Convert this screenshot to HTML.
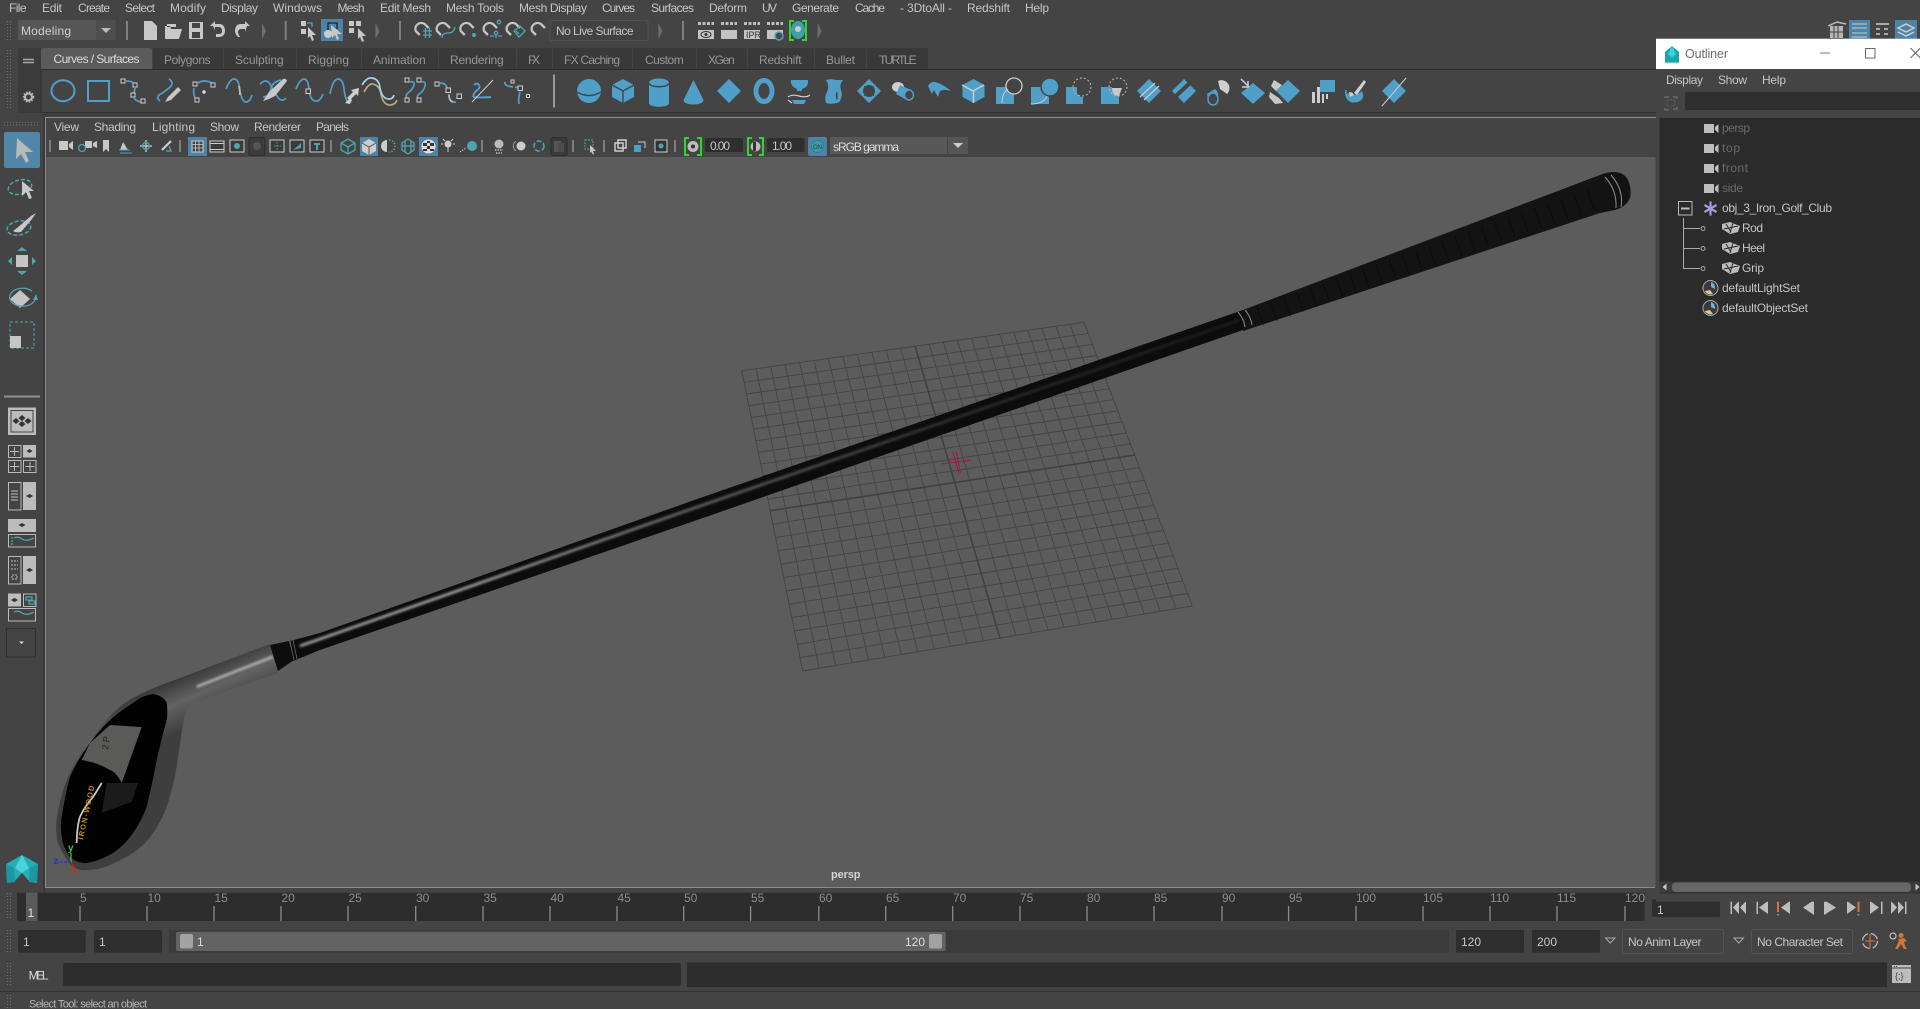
<!DOCTYPE html>
<html><head><meta charset="utf-8"><title>Maya</title>
<style>
html,body{margin:0;padding:0;background:#444;overflow:hidden}
svg{display:block}
text{font-family:"Liberation Sans",sans-serif;font-size:12px;fill:#c6c6c6}
.d{fill:#979797}.tl{fill:#8e8e8e}.sh{fill:#6b6b6b}
.b{fill:#4f9fc9}.s{fill:none;stroke:#4f9fc9;stroke-width:1.7}
.g{fill:#c8c8c8}.w{fill:none;stroke:#cfcfcf;stroke-width:1.2}
.q{fill:#3f3f3f;stroke:#cfcfcf;stroke-width:1}
.t{fill:none;stroke:#4fa5b0;stroke-width:1.3}
.m{fill:none;stroke:#7f7f7f;stroke-width:2}
.dk{stroke:#444;stroke-width:1.4;fill:none}
</style></head><body>
<svg width="1920" height="1009" viewBox="0 0 1920 1009" xmlns="http://www.w3.org/2000/svg">
<rect width="1920" height="1009" fill="#444"/>

<!-- menu -->
<g>
<text x="9" y="12" textLength="17.5">File</text><text x="42" y="12" textLength="20">Edit</text><text x="78" y="12" textLength="32">Create</text><text x="125" y="12" textLength="30">Select</text><text x="170" y="12" textLength="36">Modify</text><text x="221" y="12" textLength="37">Display</text><text x="273" y="12" textLength="49">Windows</text><text x="337.5" y="12" textLength="27">Mesh</text><text x="380" y="12" textLength="51">Edit Mesh</text><text x="446" y="12" textLength="58">Mesh Tools</text><text x="519" y="12" textLength="68">Mesh Display</text><text x="602" y="12" textLength="33">Curves</text><text x="651" y="12" textLength="43">Surfaces</text><text x="709" y="12" textLength="38">Deform</text><text x="762" y="12" textLength="15">UV</text><text x="792" y="12" textLength="47">Generate</text><text x="855" y="12" textLength="30">Cache</text><text x="900" y="12" textLength="52">- 3DtoAll -</text><text x="967" y="12" textLength="43">Redshift</text><text x="1025" y="12" textLength="24">Help</text>
</g>

<!-- status line -->
<path d="M7.5 21V40M10.5 21V40M7.5 50V110M10.5 50V110" stroke="#6e6e6e" stroke-dasharray="1 2"/>
<rect x="18" y="20" width="97.5" height="20" rx="1" fill="#565656"/><rect x="96" y="20" width="19.5" height="20" fill="#4e4e4e"/><path d="M101 28h10l-5 5z" fill="#bbb"/>
<text x="21" y="35" textLength="50" style="fill:#d0d0d0">Modeling</text>
<path class="m" d="M127 21V40M285.700 21V40M400 21V40M683 21V40" />
<path d="M262 23l4 8-4 8zM375.500 23l4 8-4 8zM658.400 23l4 8-4 8zM817.600 23l4 8-4 8z" fill="#6e6e6e"/>
<path class="g" d="M144 21h8l5 5v14h-13z"/>
<path class="g" d="M165 26v13h14l3-10h-11l-1-3zM167 24h9v3h-9z"/>
<path class="g" d="M189 22h14v17h-14z"/><path d="M192 23h8v5h-8zM192 32h8v6h-8z" fill="#444"/>
<path d="M213 26h-3l5-5v3h4c5 0 6 4 6 7s-2 6-6 6h-3v-3h3c2 0 3-1 3-3s-1-4-3-4h-4v3z" fill="#c8c8c8"/><path d="M247 26h3l-5-5v3h-4c-5 0-6 4-6 7 0 2 1 4 3 6h2c-1-2-2-3-2-5s2-3 3-3h4v3z" fill="#c8c8c8"/>
<path class="g" d="M301 21h5v5h-5zM301 29h5v5h-5zM308 27l8 8h-4l2 5-2 1-2-5-2 2z"/><path class="t" d="M307 23h5v4"/>
<rect x="321" y="19" width="22" height="22" fill="#4d83a6"/><path class="g" d="M331 25l11 9h-5l2 5-2 1-2-5-3 3z"/><path d="M328 30v-7h9v6" fill="none" stroke="#222" stroke-width="1.300"/><circle cx="328" cy="34" r="4" fill="#ccc"/>
<path class="g" d="M349 21h5v5h-5zM356 21h5v5h-5zM349 28h5v5h-5zM358 28l8 8h-4l2 5-2 1-2-5-2 2z"/>
<g fill="none" stroke="#c4c4c4" stroke-width="2.300">
<path d="M419.700 35l-4-4a6 6 0 0 1 9-7l4 4"/><path d="M441 35l-4-4a6 6 0 0 1 9-7l4 4"/><path d="M464.700 35l-4-4a6 6 0 0 1 9-7l4 4"/><path d="M488 35l-4-4a6 6 0 0 1 9-7l4 4"/><path d="M511 35l-4-4a6 6 0 0 1 9-7l4 4"/><path d="M536 35l-4-4a6 6 0 0 1 9-7l4 4"/>
</g>
<path class="t" d="M423 31h9M423 35h9M425.500 28v10M429.500 28v10M442 38q0-5 6-5t7-6M479.500 33"/>
<circle cx="474" cy="35" r="2" fill="#4fa5b0"/><circle cx="499" cy="22" r="1.700" class="t"/><circle cx="496" cy="33" r="1.700" class="t"/><path class="t" d="M490 36h4M498 36h4M496 35v3"/><path class="t" d="M514 31l6-5 5 5-6 6zM516 31l3 3"/>
<rect x="550" y="20.500" width="98" height="20" rx="1" fill="#424242" stroke="#505050"/>
<text x="556" y="35" textLength="77.500">No Live Surface</text>
<g fill="#c4c4c4"><path d="M698 30h16v9h-16z"/><path d="M721 30h16v9h-16z"/><path d="M744 30h16v9h-16z"/><path d="M767 30h16v9h-16z"/></g>
<path d="M698 23.500h16M721 23.500h16M744 23.500h16M767 23.500h16" stroke="#bdbdbd" stroke-width="3" stroke-dasharray="3 1.500"/>
<ellipse cx="706" cy="34.500" rx="5" ry="3" fill="none" stroke="#333"/><circle cx="706" cy="34.500" r="1.500" fill="#333"/>
<text x="746" y="38" style="font-size:9px;fill:#333">IPR</text>
<circle cx="779" cy="36" r="4" fill="#4a4a4a" stroke="#4fa5b0" stroke-width="1.500"/>
<path d="M794 21h-4v19h4M802 21h4v19h-4" fill="none" stroke="#35d135" stroke-width="2"/><ellipse cx="798" cy="30" rx="7" ry="9" fill="#3fa0a9"/><circle cx="798" cy="29" r="3" fill="#ccc"/>

<!-- top right -->
<path d="M1830 26h13v12h-13z" fill="#b5b5b5"/><path d="M1834 26v12M1838 26v12M1830 32h13" stroke="#444"/><path d="M1828 26l9-4 9 2" fill="none" stroke="#bbb" stroke-width="1.500"/>
<rect x="1849" y="20" width="21" height="19" fill="#4d83a6"/><path d="M1852 24h15M1852 28h15M1852 33h15M1852 37h15" stroke="#ccc"/>
<path d="M1876 24h13M1876 29h4M1884 29h4M1876 34h4M1884 34h4" stroke="#ccc" stroke-width="1.500"/>
<rect x="1895" y="20" width="22" height="19" fill="#4d83a6"/><path d="M1906 24l8 4-8 4-8-4zM1898 32l8 4 8-4" fill="none" stroke="#ccc" stroke-width="1.500"/>

<!-- shelf -->
<rect x="18" y="48" width="23" height="65" fill="#3b3b3b"/>
<path d="M23 59.500h11M23 62.500h11" stroke="#aaa" stroke-width="1.500"/>
<circle cx="28.500" cy="97" r="3.500" fill="none" stroke="#bbb" stroke-width="2"/><circle cx="28.500" cy="97" r="5" fill="none" stroke="#bbb" stroke-dasharray="1.500 1.500" stroke-width="1.500"/>
<rect x="41" y="70" width="1615" height="42" fill="#444"/>
<path d="M41 69.500H1656" stroke="#2e2e2e"/><path d="M41 112.500H1656" stroke="#2e2e2e"/><path d="M41 70V112" stroke="#2e2e2e"/>
<path d="M41 69V51q0-3 3-3h105q3 0 3 3v18z" fill="#5b5b5b"/>
<g fill="#393939">
<path d="M153 69V50q0-2 2-2h66q2 0 2 2v19z"/><path d="M224 69V50q0-2 2-2h68q2 0 2 2v19z"/><path d="M297 69V50q0-2 2-2h60q2 0 2 2v19z"/><path d="M362 69V50q0-2 2-2h72q2 0 2 2v19z"/><path d="M439 69V50q0-2 2-2h73q2 0 2 2v19z"/><path d="M517 69V50q0-2 2-2h31q2 0 2 2v19z"/><path d="M553 69V50q0-2 2-2h75q2 0 2 2v19z"/><path d="M633 69V50q0-2 2-2h59q2 0 2 2v19z"/><path d="M697 69V50q0-2 2-2h46q2 0 2 2v19z"/><path d="M748 69V50q0-2 2-2h62q2 0 2 2v19z"/><path d="M815 69V50q0-2 2-2h47q2 0 2 2v19z"/><path d="M867 69V50q0-2 2-2h57q2 0 2 2v19z"/>
</g>
<text x="53.500" y="63" textLength="86" style="fill:#dcdcdc">Curves / Surfaces</text>
<g class="d">
<text class="d" x="164" y="64" textLength="46.600">Polygons</text><text class="d" x="235" y="64" textLength="48.700">Sculpting</text><text class="d" x="308" y="64" textLength="41">Rigging</text><text class="d" x="373" y="64" textLength="52.700">Animation</text><text class="d" x="450" y="64" textLength="53.700">Rendering</text><text class="d" x="528" y="64" textLength="12">FX</text><text class="d" x="564" y="64" textLength="56">FX Caching</text><text class="d" x="645" y="64" textLength="38.700">Custom</text><text class="d" x="708" y="64" textLength="26.700">XGen</text><text class="d" x="759" y="64" textLength="42.600">Redshift</text><text class="d" x="826" y="64" textLength="29">Bullet</text><text class="d" x="879" y="64" textLength="37.700">TURTLE</text>
</g>
<!-- shelf icons -->
<ellipse class="s" cx="63" cy="90.700" rx="11.500" ry="10.500" style="stroke-width:2"/>
<rect class="s" x="88" y="81" width="21" height="20" style="stroke-width:2"/>
<path class="s" d="M126 81q6 0 7 2M135 88l-1 5M134 98q2 3 7 4"/><rect class="q" x="121" y="79" width="4" height="4"/><rect class="q" x="133" y="83" width="4" height="4"/><rect class="q" x="131" y="93" width="4" height="4"/><rect class="q" x="141" y="99" width="4" height="4"/>
<path class="s" d="M169 79q6 4 0 9t-10 7q-3 3 1 6"/><path class="g" d="M165 102l3-5 10-10 3 3-10 10z"/>
<path class="s" d="M198 83q6-4 14 0M194 88q-1 5 1 10"/><rect class="q" x="193" y="82" width="4" height="4"/><rect class="q" x="211" y="83" width="4" height="4"/><rect class="q" x="195" y="98" width="4" height="4"/><circle cx="204" cy="92" r="1.700" fill="#ddd"/>
<path class="s" d="M226 89q4-10 8-10q5 0 6 12q2 11 6 11q4 0 6-7"/><path d="M239 86q1 5 1 9" stroke="#bbb" stroke-width="1.800" fill="none"/>
<path class="s" d="M260 84q6-6 10 0q4 8 7 12q4 7 9 2M281 80q-9 2-10 9q-2 8-8 8"/><path class="g" d="M263 101l6-9 14-13q3-1 4 2l-12 15-6 3z"/>
<path class="s" d="M296 89q4-10 8-10q4 0 5 10q1 11 6 12q5 1 8-7"/><rect class="q" x="306" y="89" width="4.500" height="4.500"/>
<path class="s" d="M330 94q3-15 8-15q5 0 6 10q1 8 3 12"/><path d="M347 98l6-6-2-2 8-2-1 8-2-2-6 6zM345 103l5-5 2 2-2 4z" fill="#cfcfcf"/>
<path d="M364 92q5-9 9-8q7 2 8 10q2 11 9 11q5 0 7-5" fill="none" stroke="#b8a878" stroke-width="1.700"/><path class="s" d="M362 85q5-8 10-7q7 1 8 10q2 11 9 11q4 0 5-4" style="stroke:#a9d2e8"/>
<path class="s" d="M410 82q5-1 4 3t-6 8q-3 2-1 5M422 82q4-1 3 4t-6 8q-3 3-1 6"/><rect class="q" x="405" y="78" width="4" height="4"/><rect class="q" x="417" y="78" width="4" height="4"/><rect class="q" x="405" y="98" width="4" height="4"/><rect class="q" x="417" y="98" width="4" height="4"/>
<path class="s" d="M440 83q6 0 7 5M449 94q0 9 7 8"/><path d="M449 95q0 6 4 7" stroke="#bbb" stroke-width="1.700" fill="none"/><rect class="q" x="435" y="82" width="4" height="4"/><rect class="q" x="446" y="88" width="4.500" height="4.500"/><rect class="q" x="457" y="94" width="4.500" height="4.500"/>
<path class="s" d="M474 85q3-3 5 0t-3 6q-4 5-2 6t17 0" style="stroke-width:1.900"/><path d="M472 102l21-22" stroke="#cfcfcf" fill="none"/>
<path class="s" d="M505 82q-1 4 8 5M520 92q-2 6-1 12"/><path class="s" d="M515 87l4 1"/><rect class="q" x="511" y="80" width="3" height="3"/><rect class="q" x="518" y="86" width="4.500" height="4.500"/><rect class="q" x="526.500" y="94.500" width="3" height="3"/>
<path d="M554 74.500V107.500" stroke="#9a9a9a" stroke-width="2"/>
<circle class="b" cx="589" cy="91" r="12"/><path class="dk" d="M577 92q12 7 24 0"/>
<path class="b" d="M623 79l11 6v12l-11 6-11-6V85z"/><path class="dk" d="M612 85l11 6 11-6M623 91v12"/>
<path class="b" d="M649 83c0-6 20-6 20 0v20c0 5-20 5-20 0z"/><path class="dk" d="M649 83c0 5 20 5 20 0"/>
<path class="b" d="M693.500 80l10 20c0 6-20 6-20 0z"/>
<path class="b" d="M729 79l12 12-12 12-12-12z"/>
<ellipse cx="764" cy="91" rx="8" ry="10.500" fill="none" stroke="#4f9fc9" stroke-width="5"/>
<path class="b" d="M791 80h17q1 7-6 9v2h-5v-2q-7-3-6-9z"/><path class="w" d="M788 97q4-3 11-1t11-1M788 100l4 3"/><path class="b" d="M792 100h14l-2 4h-10z"/>
<path class="b" d="M826 80q8-2 11 1 3 6-1 12-1 7 3 9-7 3-13 1-2-6 1-11 3-6-1-12zM836 80q3 0 7 0-4 5-2 10t-1 11q-1 2-4 2 3-6 1-12-2-6-1-11z"/>
<path d="M869 79l12 12-12 12-12-12z" class="b"/><circle cx="869" cy="91" r="6" fill="#444"/><path d="M864 86l10 10M874 86l-10 10" stroke="#444" stroke-width="1"/>
<ellipse cx="898" cy="87" rx="6" ry="5" fill="#cfcfcf"/><path class="b" d="M900 85l9 4q4 6-1 10h-3l-9-5z"/><ellipse cx="909" cy="95" rx="4.500" ry="5" fill="#444" stroke="#4f9fc9" stroke-width="1.500"/>
<path class="b" d="M928 86q3-5 7-4 8 2 16 9-7-2-11 0l-2 6-4-7-2 4z"/>
<path class="b" d="M973.500 79l11 6v12l-11 6-11-6V85z"/><path d="M962 85l11 6 11-6M973.500 91v12" stroke="#ccc" stroke-width="1.500" fill="none"/>
<path class="b" d="M996 87h18v17h-18z"/><circle cx="1014" cy="86" r="8" fill="#444" stroke="#cfcfcf" stroke-width="1.300"/><path d="M1002 103q0-10 6-14" stroke="#ccc" fill="none"/>
<path class="b" d="M1031 87h18v17h-18z"/><path d="M1031 104q14 0 17-10" stroke="#ccc" fill="none"/><circle class="b" cx="1050" cy="87" r="9" stroke="#444" stroke-width="1.500"/>
<path class="b" d="M1066 87h11v4q0 6 6 6v7h-17z"/><circle cx="1082" cy="87" r="9" fill="none" stroke="#bbb" stroke-dasharray="2 2"/>
<path class="b" d="M1101 87h11q0 9 7 9v8h-18z"/><path d="M1112 88q0 8 7 8l3-8-10 0z" fill="#c9c9c9"/><circle cx="1118" cy="87" r="9" fill="none" stroke="#bbb" stroke-dasharray="2 2"/>
<path class="b" d="M1149 79l12 12-12 12-12-12z"/><path d="M1140 97l15-14M1144 100l15-14" stroke="#ccc" stroke-width="1.300"/>
<path class="b" d="M1184 79l12 12-12 12-12-12z"/><path d="M1176 96l15-14" stroke="#444" stroke-width="4"/><path d="M1178 99l16-15" stroke="#444" stroke-width="0"/>
<path d="M1218 81a8 8 0 0 1 9 13l-7-5z" fill="#cfcfcf"/><path class="b" d="M1207 94l8-5q5 4 2 11l-8 3z"/><ellipse cx="1213" cy="99" rx="5" ry="6" fill="#444" stroke="#4f9fc9" stroke-width="1.500"/>
<path class="b" d="M1253 83l12 10-12 11-12-11z"/><path d="M1241 79l8 8m-1 -6v6h-6" fill="none" stroke="#cfcfcf" stroke-width="1.500"/>
<path class="b" d="M1288 80l12 11-12 12-12-12z"/><path class="g" d="M1270 92l9 6 4 5-8 1-6-7zM1274 80l8 5-6 6-5-5z" transform="translate(0,0)"/>
<path class="b" d="M1320 80h15v12h-15z"/><path d="M1312 92h3v11h-3zM1317 87h3v16h-3zM1322 94h2v9h-2zM1326 94h2v5h-2z" fill="#cfcfcf"/>
<path class="b" d="M1347 93q9 4 15-2 3 7-2 10-6 3-10 0-3-3-3-8z"/><path class="s" d="M1346 90q-1 10 7 12"/><path d="M1354 93l10-13 2 2-9 13z" fill="#cfcfcf"/><path d="M1349 92a5 5 0 0 1 5 3l-4 2z" fill="#cfcfcf"/>
<path class="b" d="M1390 79l12 12-12 12-12-12z" transform="translate(4,0)"/><path d="M1382 106l24-28" stroke="#cfcfcf"/>

<!-- Viewport panel -->
<rect x="43" y="117" width="2.500" height="775" fill="#393939"/>
<path d="M4 125H38" stroke="#777" stroke-dasharray="1 2"/><path d="M4 122.500H38" stroke="#6a6a6a" stroke-dasharray="1 2"/>
<rect x="45.500" y="157" width="1610" height="730" fill="#5c5c5c"/>
<path d="M45.500 117.500H1656M45.500 117V887.500H1655" stroke="#8a8a8a" fill="none"/>
<path d="M41 115H1656" stroke="#333"/>
<text x="54" y="131" textLength="25">View</text><text x="94" y="131" textLength="42">Shading</text><text x="152" y="131" textLength="43">Lighting</text><text x="210" y="131" textLength="29">Show</text><text x="254" y="131" textLength="47">Renderer</text><text x="316" y="131" textLength="33">Panels</text>
<!-- panel toolbar -->
<path class="m" d="M50 140V152M180 140V152M331 140V152M482 140V152M573 140V152M604 140V152M675 140V152" />
<path class="g" d="M59 141h9v9h-9zM69 144l4-3v9l-4-3z"/><path class="g" d="M85 141h7v7h-7zM93 143l4-2v7l-4-2z"/><circle cx="82" cy="148" r="3.500" class="t" fill="none"/>
<path class="g" d="M103 140h6v12l-3-3-3 3z"/>
<path class="g" d="M123 142l5 8h-8z"/><path d="M119 150h11M120 153h12" stroke="#4fa5b0" fill="none"/>
<path d="M146 140v12M140 146h12" stroke="#cfcfcf" stroke-width="1.300"/><circle cx="146" cy="146" r="3.500" class="t"/>
<path d="M162 150l9-9" stroke="#cfcfcf" stroke-width="2"/><path d="M166 151h5l-2-5" class="t"/>
<rect x="188" y="137" width="19" height="19" fill="#4d83a6"/><rect x="192" y="141" width="11" height="11" fill="#444" stroke="#ccc"/><path d="M195.500 141v11M199 141v11M192 144.500h11M192 148h11" stroke="#ccc" stroke-width=".8"/>
<rect x="210" y="141" width="14" height="11" fill="#3a3a3a" stroke="#ccc"/><path d="M210 143.500h14M210 149.500h14" stroke="#ccc"/>
<rect x="230" y="140" width="14" height="12" fill="#3a3a3a" stroke="#ccc"/><circle cx="237" cy="146" r="3" fill="#4fa5b0"/>
<rect x="249" y="137.500" width="16" height="18" rx="2" fill="#3c3c3c" stroke="#2d2d2d"/><circle cx="257" cy="146" r="4" fill="#555"/>
<rect x="270" y="140" width="14" height="12" fill="#3a3a3a" stroke="#ccc"/><path d="M274 146h7M277 142v8" stroke="#4fa5b0" stroke-dasharray="1.500 1.500"/>
<rect x="290" y="140" width="14" height="12" fill="#3a3a3a" stroke="#ccc"/><path d="M293 150l5-4 3-3v5z" fill="#4fa5b0"/>
<rect x="310" y="140" width="14" height="12" fill="#3a3a3a" stroke="#ccc"/><path d="M314 143h6v2h-2v5h-2v-5h-2z" fill="#4fa5b0"/>
<path class="t" d="M348 139l7 4v7l-7 4-7-4v-7zM341 143l7 4 7-4M348 147v7"/>
<rect x="360" y="137" width="18" height="19" fill="#4d83a6"/><path d="M369 139l7 4v8l-7 4-7-4v-8z" fill="#ccc"/><path d="M369 147v8M362 143l7 4 7-4" stroke="#555" fill="none"/>
<path d="M387 140a6 6 0 0 0 0 12z" fill="#ccc"/><path d="M389 140a6 6 0 0 1 0 12" fill="none" stroke="#4fa5b0" stroke-dasharray="1.500 1.500" stroke-width="1.500"/>
<path class="t" d="M408 139l6 4v7l-6 4-6-4v-7zM402 146h12M405 141v11M411 141v11"/>
<rect x="419" y="137" width="19" height="19" fill="#4d83a6"/><circle cx="428.500" cy="146.500" r="7" fill="#ddd"/><path d="M423 143h4v3h-4zM430 143h4v3h-4zM427 146h3v3h-3zM423 149h4v2h-4zM430 149h4v2h-4zM427 141h3v2h-3z" fill="#333"/>
<circle cx="448" cy="144" r="3.500" fill="#ccc"/><path d="M448 147v5M441 144h2M453 144h2M443 139l2 2M453 139l-2 2" stroke="#ccc"/>
<circle cx="472" cy="146" r="5" fill="#4fa5b0"/><path d="M460 152l6-4" stroke="#ccc" stroke-dasharray="1.500 1"/>
<circle cx="499" cy="144" r="4.500" fill="#bbb"/><path d="M495 150h8M496 153h6" stroke="#bbb" stroke-width="1.500" stroke-dasharray="1.500 1"/>
<circle cx="521" cy="146" r="4.500" fill="#ccc"/><path d="M516 141a6 6 0 0 0 0 10" fill="none" stroke="#999"/>
<circle cx="539" cy="146" r="5" fill="none" stroke="#4fa5b0" stroke-width="1.500" stroke-dasharray="5 2"/>
<rect x="551" y="137.500" width="16" height="18" rx="2" fill="#3b3b3b" stroke="#2d2d2d"/><rect x="554" y="141" width="7" height="11" fill="#555"/><rect x="558" y="143" width="6" height="9" fill="#4d4d4d"/>
<rect x="585" y="140" width="8" height="9" fill="none" stroke="#4fa5b0" stroke-dasharray="2 1"/><path class="g" d="M590 145l6 6h-3l1 3-1 .5-2-3-1 2z"/>
<rect x="615" y="143" width="8" height="8" fill="none" stroke="#ccc" stroke-width="1.500"/><rect x="618" y="140" width="8" height="8" fill="none" stroke="#ccc" stroke-width="1.500"/>
<path d="M634 145h7v7h-7z" fill="#4d9fc5"/><path d="M638 142h7v6" fill="none" stroke="#ccc"/>
<rect x="655" y="140" width="12" height="12" fill="#333" stroke="#ccc"/><circle cx="661" cy="146" r="2.500" fill="#4fa5b0"/>
<path d="M689 138h-4v17h4M697 138h4v17h-4" fill="none" stroke="#35d135" stroke-width="2"/><circle cx="693" cy="146.500" r="5.500" fill="#bbb"/><circle cx="693" cy="146.500" r="2" fill="#333"/>
<rect x="705" y="138" width="38" height="14" rx="2" fill="#2e2e2e"/><text x="710" y="150" textLength="20">0.00</text>
<path d="M752 138h-4v17h4M759 138h4v17h-4" fill="none" stroke="#35d135" stroke-width="2"/><circle cx="755.500" cy="146.500" r="5" fill="#bbb"/><rect x="753" y="142" width="3" height="9" fill="#333"/>
<rect x="767" y="138" width="37.500" height="14" rx="2" fill="#2e2e2e"/><text x="772" y="150" textLength="20">1.00</text>
<rect x="808" y="137" width="19" height="19" rx="2" fill="#4d83a6"/><circle cx="817.500" cy="146.500" r="6" fill="#3d9aa8" stroke="#2f7f8c"/><text x="813" y="149" style="font-size:6px;fill:#244">ON</text>
<rect x="830" y="137" width="117" height="17" fill="#585858"/><text x="833" y="151" textLength="66" style="fill:#ddd">sRGB gamma</text>
<rect x="948" y="137" width="20" height="17" rx="1" fill="#555"/><path d="M953 143h10l-5 5z" fill="#ccc"/>

<!-- Left toolbar -->
<rect x="4" y="132" width="36" height="36" rx="2" fill="#5286a8"/>
<path d="M17 138l16 14h-8l4 9-3 2-5-9-5 5z" fill="#b9b9b9"/>
<ellipse cx="20" cy="187" rx="12" ry="7" fill="none" stroke="#4fa5b0" stroke-width="1.500" stroke-dasharray="4 2" transform="rotate(-15 20 187)"/><path class="g" d="M22 181l12 10h-5l3 7-3 1-3-7-4 4z"/>
<ellipse cx="19" cy="228" rx="12" ry="7" fill="none" stroke="#4fa5b0" stroke-width="1.500" stroke-dasharray="4 2" transform="rotate(-10 19 228)"/><path class="g" d="M17 228l14-12 5-3-4 6-11 13q-5 1-8-1z"/>
<rect x="16" y="255" width="12" height="12" fill="#c5c5c5"/><path d="M22 247l5 4h-10zM22 275l5-4h-10zM8 261l4-4v8zM36 261l-4-4v8z" fill="#4fa5b0"/>
<path d="M20 290l10 9-10 9-10-9z" fill="#c5c5c5"/><path d="M32 291a13 9 0 1 0 3 9" fill="none" stroke="#4fa5b0" stroke-width="1.300"/><path d="M36 294l2 6h-5z" fill="#4fa5b0"/>
<rect x="10" y="322" width="24" height="26" fill="none" stroke="#4fa5b0" stroke-dasharray="3 2"/><rect x="10" y="336" width="11" height="12" fill="#c5c5c5"/>
<path d="M4 396.500H40" stroke="#8f8f8f" stroke-width="2"/>
<rect x="8" y="407.500" width="28" height="27.500" fill="#bcbcbc"/><rect x="11" y="410.500" width="22" height="21.500" fill="none" stroke="#444"/><path d="M22 415l3.500 3-3.500 3-3.500-3zM16 418l3.500 3-3.500 3-3.500-3zM28 418l3.500 3-3.500 3-3.500-3zM22 421l3.500 3-3.500 3-3.500-3z" fill="#333"/>
<g fill="none" stroke="#bbb"><rect x="8.500" y="445.500" width="12.500" height="12"/><rect x="8.500" y="460.500" width="12.500" height="12"/><rect x="23.500" y="460.500" width="12.500" height="12"/><path d="M14.500 447v9M10 451.500h9M14.500 462v9M10 466.500h9M30 462v9M25.500 466.500h9"/></g><rect x="23" y="445" width="13" height="12.500" fill="#bcbcbc"/><path d="M29.500 449l3 2-3 2-3-2z" fill="#333"/>
<rect x="8.500" y="482.500" width="12.500" height="27.500" fill="none" stroke="#bbb"/><path d="M11 491h7M11 494h7M11 497h7M11 500h7" stroke="#bbb"/><rect x="23" y="482" width="13" height="28" fill="#bcbcbc"/><path d="M29.500 494l3.500 2-3.500 2-3.500-2z" fill="#333"/>
<rect x="8" y="519" width="28" height="13" fill="#bcbcbc"/><path d="M22 523l3.500 2-3.500 2-3.500-2z" fill="#333"/><rect x="8.500" y="534.500" width="27" height="12.500" fill="none" stroke="#bbb"/><path d="M14 538q4-2 8 1t12-1M11 538h2M11 541h2M11 544h2" class="t"/>
<rect x="8.500" y="556.500" width="12.500" height="27.500" fill="none" stroke="#bbb"/><path d="M11 561h7M11 565h7M11 569h7M12 575h5v4h-5z" stroke="#bbb" stroke-dasharray="2 1" fill="none"/><rect x="23" y="556" width="13" height="28" fill="#bcbcbc"/><path d="M29.500 568l3.500 2-3.500 2-3.500-2z" fill="#333"/>
<rect x="8" y="593.500" width="13" height="13" fill="#bcbcbc"/><path d="M14.500 598l3.500 2-3.500 2-3.500-2z" fill="#333"/><rect x="23.500" y="594" width="12.500" height="12.500" fill="none" stroke="#bbb"/><path d="M26 597h6v3h-6zM29 601h6v3h-6z" class="t"/><rect x="8.500" y="608.500" width="27" height="12.500" fill="none" stroke="#bbb"/><path d="M14 612q4-2 8 1t12-1" class="t"/>
<rect x="6.500" y="628.500" width="29" height="28.500" fill="none" stroke="#2f2f2f"/><path d="M19 641.500h5l-2.500 2.500z" fill="#ddd"/>
<path d="M6 864l16-9 16 9-1 19-7-1-8-9-8 9-7 1z" fill="#27adb6"/><path d="M22 855l-7 13 7 5 7-5z" fill="#45d4da"/><path d="M6 864l8 4 1 14-8 1zM38 864l-8 4-1 14 8 1z" fill="#1c98a2"/>

<!-- Viewport contents: grid -->
<g fill="none" stroke="#444" stroke-width=".9">
<path d="M741.700 370.700L802.700 671M756.100 368.600L819.100 668.300M770.600 366.500L835.600 665.600M785 364.500L852 662.800M799.500 362.400L868.500 660.100M813.900 360.300L884.900 657.400M828.300 358.200L901.300 654.700M842.800 356.100L917.800 651.900M857.200 354.100L934.200 649.200M871.700 352L950.700 646.500M886.100 349.900L967.100 643.800M900.500 347.800L983.500 641M929.100 343.800L1016 635.600M943.200 341.800L1032.100 632.900M957.200 339.900L1048.100 630.200M971.300 337.900L1064.100 627.500M985.400 336L1080.200 624.900M999.500 334L1096.200 622.200M1013.600 332.100L1112.200 619.500M1027.600 330.100L1128.200 616.800M1041.700 328.200L1144.300 614.100M1055.800 326.200L1160.300 611.400M1069.900 324.300L1176.300 608.700M1084 322.300L1192.300 606"/>
<path d="M741.700 370.700L1084 322.300M744.100 382.400L1088.300 333.400M746.400 394L1092.500 344.400M748.800 405.700L1096.800 355.500M751.100 417.400L1101 366.500M753.500 429L1105.300 377.600M755.900 440.700L1109.500 388.700M758.200 452.400L1113.800 399.700M760.600 464L1118 410.800M762.900 475.700L1122.300 421.800M765.300 487.400L1126.500 432.900M767.600 499L1130.800 443.900M772.700 524.100L1139.800 467.600M775.500 537.400L1144.600 480.200M778.200 550.800L1149.300 492.700M780.900 564.100L1154.100 505.300M783.600 577.500L1158.900 517.900M786.400 590.900L1163.700 530.500M789.100 604.200L1168.500 543.100M791.800 617.600L1173.200 555.600M794.500 630.900L1178 568.200M797.300 644.300L1182.800 580.800M800 657.600L1187.500 593.400M802.700 671L1192.300 606"/>
<path d="M915 345.700L1000 638.300M770 510.700L1135 455" stroke="#404040" stroke-width="1.600"/>
</g>
<g stroke="#a31a43" stroke-width="1.100" fill="none"><path d="M941 464L971.500 460M953 452L959 474M956 451L960.500 473"/></g>

<!-- Club -->
<defs><linearGradient id="hl" gradientUnits="userSpaceOnUse" x1="300" y1="645" x2="1240" y2="322"><stop offset="0" stop-color="#bbb"/><stop offset=".18" stop-color="#b5b5b5"/><stop offset=".45" stop-color="#6a6a6a"/><stop offset=".7" stop-color="#333"/><stop offset="1" stop-color="#1a1a1a"/></linearGradient>
<linearGradient id="hs" gradientUnits="userSpaceOnUse" x1="220" y1="660" x2="240" y2="705"><stop offset="0" stop-color="#3a3a3a"/><stop offset=".45" stop-color="#626262"/><stop offset="1" stop-color="#3e3e3e"/></linearGradient>
<filter id="bl" x="-5%" y="-50%" width="110%" height="200%"><feGaussianBlur stdDeviation="1.200"/></filter></defs>
<path d="M290 641L320 633L700 498L1243 310L1243 330L700 519L320 650L293 661Z" fill="#0c0c0c"/>
<path d="M300 646L700 506L1240 320" stroke="url(#hl)" stroke-width="2.400" fill="none" filter="url(#bl)"/>
<path d="M1243 310L1600 175Q1607 172 1613 172Q1624 172 1628 180Q1632 190 1630 198Q1626 207 1615 210L1600 213L1243 331Z" fill="#131313"/>
<path d="M1260 316L1600 196" stroke="#050505" stroke-width="21" stroke-dasharray="1 13" fill="none" opacity=".45"/>
<path d="M1238 312q6 7 7 15M1245 310q6 7 7 15" stroke="#8a8a8a" fill="none" stroke-width="1"/>
<path d="M1605 177Q1617 190 1616 208M1611 175Q1624 190 1621 207" stroke="#8f8f8f" fill="none" stroke-width="1"/>
<path d="M270 644L166.700 683Q145 691 133 698Q117 707 106.700 720Q92 736 83 750Q72 767 66.700 780Q59 800 56.700 820Q55 832 58 843Q64 858 73 866.700Q79 871 86.700 870Q99 870 110 865Q122 860 133 853Q146 844 153 833Q162 820 166.700 806.700Q173 788 176.700 766.700Q181 735 185 713Q187 707 193 703L278 673Z" fill="url(#hs)"/>
<path d="M153 694Q164 696 166.700 703Q168 712 166.700 720Q161 740 156.700 760Q152 785 146.700 806.700Q141 822 133 833Q125 845 113 853Q100 861 86.700 863Q76 863 70 856.700Q63 848 61.700 836.700Q60 826 61.700 816.700Q65 795 70 776.700Q76 763 83 753Q96 733 110 720Q120 711 133 703Q143 695 153 694Z" fill="#020202"/>
<path d="M110 725L141.700 727L121.700 783Q116 772 110 770Q96 762 81.700 760L90 743Z" fill="#5a5a58"/>
<path d="M106.700 783L138 783L131.700 801.700L101.700 813Z" fill="#1b1b1b"/>
<path d="M76.700 843Q77 826 80 816.700Q85 806 93.300 796.700L101.700 783" stroke="#c9c9d0" stroke-width="1.800" fill="none"/>
<text transform="translate(83 840) rotate(-78)" textLength="55" style="font-size:7.500px;font-weight:bold;fill:#c58a22">IRON-WOOD</text>
<text transform="translate(108 750) rotate(-82)" style="font-size:9px;fill:#222">2 P</text>
<path d="M196.700 686.700L273 656.700" stroke="#d0d0d0" stroke-width="2" filter="url(#bl)"/>
<path d="M270 645L289 641L294 660L278 671Z" fill="#0d0d0d"/>
<path d="M290 641l4 19M293 640l4 19" stroke="#666" stroke-width=".8"/>
<!-- axis -->
<path d="M71 862V853" stroke="#3acb3a" stroke-width="1.300"/><path d="M71 862H58" stroke="#2424d0" stroke-width="1" stroke-dasharray="3 1"/><path d="M71 862l3 5" stroke="#d11" stroke-width="1.300"/>
<text x="68" y="851" style="font-size:10px;font-weight:bold;fill:#3acb3a">y</text><text x="53.500" y="864" style="font-size:10px;font-weight:bold;fill:#2a2ad8">z</text><text x="71" y="873" style="font-size:10px;font-weight:bold;fill:#d22">x</text>
<text x="831" y="878" textLength="29.500" style="font-size:11px;font-weight:bold;fill:#d5d5d5">persp</text>

<!-- Time slider -->
<rect x="17" y="892.700" width="1627.500" height="28.300" fill="#2d2d2d"/>
<rect x="26" y="892.700" width="11.500" height="28.300" fill="#5a5a5a"/>
<text x="27.500" y="917" style="fill:#e5e5e5;font-size:12px">1</text>
<path d="M80 906V921M147 906V921M214 906V921M281 906V921M348 906V921M415.700 906V921M483 906V921M550 906V921M617 906V921M683.700 906V921M750.600 906V921M818.800 906V921M885.700 906V921M952.700 906V921M1020 906V921M1087 906V921M1154 906V921M1222 906V921M1288.600 906V921M1356 906V921M1423 906V921M1490 906V921M1557 906V921M1625 906V921" stroke="#8c8c8c" stroke-width="1.300"/>
<text class="tl" x="80" y="902">5</text><text class="tl" x="147.500" y="902">10</text><text class="tl" x="214.500" y="902">15</text><text class="tl" x="281.500" y="902">20</text><text class="tl" x="348.500" y="902">25</text><text class="tl" x="416" y="902">30</text><text class="tl" x="483.500" y="902">35</text><text class="tl" x="550.500" y="902">40</text><text class="tl" x="617.500" y="902">45</text><text class="tl" x="684" y="902">50</text><text class="tl" x="751" y="902">55</text><text class="tl" x="819" y="902">60</text><text class="tl" x="886" y="902">65</text><text class="tl" x="953" y="902">70</text><text class="tl" x="1020" y="902">75</text><text class="tl" x="1087" y="902">80</text><text class="tl" x="1154" y="902">85</text><text class="tl" x="1222" y="902">90</text><text class="tl" x="1289" y="902">95</text><text class="tl" x="1356" y="902">100</text><text class="tl" x="1423" y="902">105</text><text class="tl" x="1490" y="902">110</text><text class="tl" x="1557" y="902">115</text><text class="tl" x="1625" y="902">120</text>
<path d="M7.500 893V920M10.500 893V920M7.500 930V952M10.500 930V952M7.500 963V985M10.500 963V985M7.500 995V1008M10.500 995V1008" stroke="#6e6e6e" stroke-dasharray="1 2"/>

<!-- Range slider -->
<rect x="18" y="930" width="67.700" height="22.700" rx="2" fill="#2e2e2e"/><text x="23" y="946">1</text>
<rect x="94" y="930" width="68" height="22.700" rx="2" fill="#2e2e2e"/><text x="99" y="946">1</text>
<rect x="169" y="930" width="1280" height="22.700" fill="#3b3b3b"/>
<rect x="176" y="931.700" width="769.700" height="19.300" rx="2" fill="#636363"/>
<rect x="180" y="934" width="13" height="14.500" rx="2" fill="#a2a2a2"/><text x="197" y="946" style="fill:#ddd">1</text>
<text x="905" y="946" textLength="20" style="fill:#ddd">120</text><rect x="929" y="934" width="13" height="14.500" rx="2" fill="#a2a2a2"/>
<rect x="1456" y="930" width="68" height="22.700" rx="2" fill="#2e2e2e"/><text x="1461" y="946">120</text>
<rect x="1532" y="930" width="68" height="22.700" rx="2" fill="#2e2e2e"/><text x="1537" y="946">200</text>
<path d="M1605.500 938h9.500l-4.750 5z" fill="none" stroke="#aaa"/><path d="M1734 938h9.500l-4.750 5z" fill="none" stroke="#aaa"/>
<rect x="1622.500" y="929.500" width="101" height="24" rx="2" fill="#434343" stroke="#535353"/><text x="1628" y="946" textLength="73.500">No Anim Layer</text>
<rect x="1751.500" y="929.500" width="101" height="24" rx="2" fill="#434343" stroke="#535353"/><text x="1757" y="946" textLength="86">No Character Set</text>
<circle cx="1870" cy="941" r="7.500" fill="none" stroke="#bbb" stroke-width="1.300" stroke-dasharray="9 3"/><path d="M1870 934v14M1865 941h10" stroke="#c8693a" stroke-width="1.300"/>
<circle cx="1893" cy="936" r="3" fill="none" stroke="#ccc"/><path d="M1901 933a2.500 2.500 0 1 0 .1 0zM1898 939l6-1 3 3-3 1 1 4 2 3h-3l-3-5-3 5h-3l3-6 1-3z" fill="#d4762f"/>

<!-- Playback -->
<rect x="1652" y="899" width="68" height="18" rx="2" fill="#2e2e2e"/><text x="1657" y="914">1</text>
<g fill="#bdbdbd">
<path d="M1730.500 901h1.500v13h-1.500zM1739 901v13l-6-6.500zM1746 901v13l-6-6.500z"/>
<path d="M1756.500 901h1.500v13h-1.500zM1768 901v13l-9-6.500z"/>
<path d="M1790 901v13l-9-6.500z"/>
<path d="M1814 900v15l-11-7.500z"/>
<path d="M1824 900v15l12-7.500z"/>
<path d="M1847 901v13l9-6.500z"/>
<path d="M1870 901v13l9-6.500zM1881 901h1.500v13h-1.500z"/>
<path d="M1891 901v13l6-6.500zM1898 901v13l6-6.500zM1905 901h1.500v13h-1.500z"/>
</g>
<path d="M1778 901v11M1778 914v1.500M1858.500 901v11M1858.500 914v1.500" stroke="#d4762f" stroke-width="2"/>

<!-- Command -->
<text x="28.600" y="979.500" textLength="20" style="fill:#dcdcdc">MEL</text>
<rect x="63" y="963" width="618" height="23" rx="2" fill="#2d2d2d"/>
<rect x="687" y="962.500" width="1200" height="24.500" fill="#2d2d2d"/>
<rect x="1892" y="965" width="19" height="18" fill="#bdbdbd"/><path d="M1892 968h19" stroke="#444"/><path d="M1894 966.500h4" stroke="#444" stroke-dasharray="1 1"/><text x="1895" y="979" style="font-size:9px;fill:#444">{;}</text>
<path d="M0 991.500H1920" stroke="#333"/>
<text x="29" y="1007.500" textLength="118" style="font-size:11px;fill:#b5b5b5">Select Tool: select an object</text>

<!-- Outliner window -->
<rect x="1656" y="38.700" width="264" height="863" fill="#444"/>
<rect x="1656" y="38.700" width="264" height="30.300" fill="#fff"/>
<path d="M1672 46l7 6v11h-14V52z" fill="#1aa5ad"/><path d="M1672 46l4 8-4 4-4-4z" fill="#39d1d6"/><path d="M1665 63h14" stroke="#ccc"/>
<text x="1685" y="58" textLength="43" style="fill:#6f6f6f;font-size:12.500px">Outliner</text>
<path d="M1820 53h10" stroke="#777"/><rect x="1865.500" y="48.500" width="9.500" height="9.500" fill="none" stroke="#666"/><path d="M1910.500 48l10 10M1920.500 48l-10 10" stroke="#666" fill="none"/>
<text x="1666" y="84" textLength="37">Display</text><text x="1718" y="84" textLength="29">Show</text><text x="1762" y="84" textLength="24">Help</text>
<rect x="1685" y="92" width="240" height="18" rx="2" fill="#2f2f2f"/>
<path d="M1665 98v-1h4M1673 97h4v2M1677 107v2h-4M1669 110h-4v-2" stroke="#666" fill="none" stroke-width="1.500"/><rect x="1667" y="100" width="8" height="6" fill="none" stroke="#555"/>
<rect x="1659.600" y="118" width="260.400" height="763.700" fill="#2b2b2b"/>
<g fill="#bdbdbd">
<path d="M1704 124h10v9h-10zM1715 127l3.500-3v9l-3.500-3z"/><path d="M1704 144h10v9h-10zM1715 147l3.500-3v9l-3.500-3z"/><path d="M1704 164h10v9h-10zM1715 167l3.500-3v9l-3.500-3z"/><path d="M1704 184h10v9h-10zM1715 187l3.500-3v9l-3.500-3z"/>
</g>
<text class="sh" x="1722" y="132" textLength="28">persp</text><text class="sh" x="1722" y="152" textLength="18">top</text><text class="sh" x="1722" y="172" textLength="26">front</text><text class="sh" x="1722" y="192" textLength="21">side</text>
<rect x="1678.500" y="201.500" width="13.500" height="13.500" fill="none" stroke="#bbb"/><path d="M1681 208.500h8.500" stroke="#bbb" stroke-width="2"/>
<path d="M1710.500 201.500V215.500M1704.500 205l12 7M1716.500 205l-12 7" stroke="#a79be0" stroke-width="2.200"/>
<text x="1722" y="212" textLength="110">obj_3_Iron_Golf_Club</text>
<path d="M1683.500 218V268.500H1700M1683.500 228.500H1700M1683.500 248.500H1700" stroke="#aaa" fill="none"/>
<circle cx="1703" cy="228.500" r="2" fill="#2b2b2b" stroke="#aaa"/><circle cx="1703" cy="248.500" r="2" fill="#2b2b2b" stroke="#aaa"/><circle cx="1703" cy="268.500" r="2" fill="#2b2b2b" stroke="#aaa"/>
<g fill="#bbb"><path d="M1722 224l8-2 10 4-2 6-8 2-8-5z"/><path d="M1722 244l8-2 10 4-2 6-8 2-8-5z"/><path d="M1722 264l8-2 10 4-2 6-8 2-8-5z"/></g>
<path d="M1726 224l5 8M1733 223l-3 10M1724 229l14-3M1726 244l5 8M1733 243l-3 10M1724 249l14-3M1726 264l5 8M1733 263l-3 10M1724 269l14-3" stroke="#2b2b2b"/>
<text x="1742" y="232" textLength="21">Rod</text><text x="1742" y="252" textLength="23">Heel</text><text x="1742" y="272" textLength="22">Grip</text>
<circle cx="1710.500" cy="288" r="7.500" fill="#3a3a3a" stroke="#aaa"/><path d="M1705 291a6 5 0 0 0 8 3l-3-4z" fill="#d8c88c"/><path d="M1711 282a5 6 0 0 1 4 7l-4-2z" fill="#6fb0dd"/>
<circle cx="1710.500" cy="308" r="7.500" fill="#3a3a3a" stroke="#aaa"/><path d="M1705 311a6 5 0 0 0 8 3l-3-4z" fill="#d8c88c"/><path d="M1711 302a5 6 0 0 1 4 7l-4-2z" fill="#6fb0dd"/>
<text x="1722" y="292" textLength="78">defaultLightSet</text><text x="1722" y="312" textLength="86">defaultObjectSet</text>
<rect x="1659.600" y="881.700" width="260.400" height="11" fill="#3b3b3b"/>
<rect x="1672" y="882.500" width="239" height="9.500" rx="4" fill="#666"/>
<path d="M1666.500 883.500v7l-4-3.500zM1915.500 883.500v7l4-3.500z" fill="#c4c4c4"/>
<path d="M1659.600 893H1920" stroke="#2e2e2e"/>
</svg>
</body></html>
